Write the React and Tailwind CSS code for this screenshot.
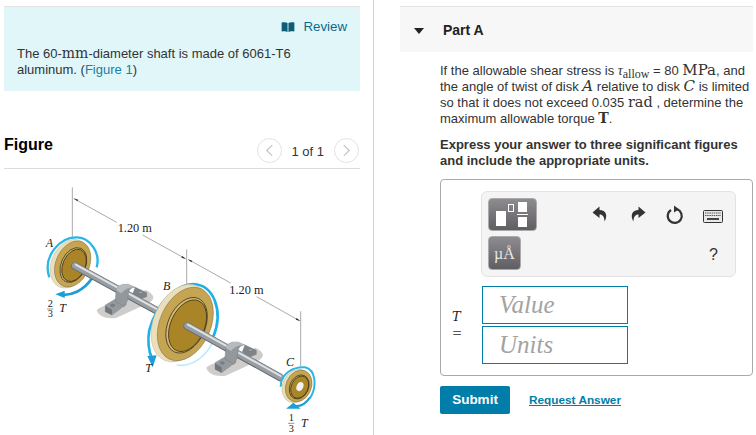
import { useState } from "react";

const sans = "font-['Liberation_Sans',Arial,sans-serif]";
const serif = "font-['Liberation_Serif','Times_New_Roman',serif]";
const math = "font-['DejaVu_Serif','Liberation_Serif',serif]";

// one disk on the shaft: rim, gold face and the recessed ring
const Disk = ({ cx, cy, rx, ry, hole }) => (
  <g transform={`rotate(24 ${cx} ${cy})`}>
    <ellipse cx={cx - rx * 0.16} cy={cy + 3} rx={rx} ry={ry} fill="#eadfba" stroke="#c4b994" strokeWidth="1.5" />
    <ellipse cx={cx} cy={cy} rx={rx * 0.93} ry={ry * 0.95} fill="#c6a552" stroke="#7a6a45" strokeWidth="1.5" />
    <ellipse cx={cx + rx * 0.06} cy={cy + 2} rx={rx * 0.68} ry={ry * 0.72} fill="#d3bb72" stroke="#2c2412" strokeWidth="2" />
    <ellipse cx={cx + rx * 0.1} cy={cy + 2} rx={rx * 0.62} ry={ry * 0.67} fill="#a98528" stroke="#2c2412" strokeWidth="2" />
    {hole && <ellipse cx={cx + rx * 0.1} cy={cy} rx={rx * 0.24} ry={ry * 0.27} fill="#f2f2f2" />}
  </g>
);

// pillow block, drawn in two parts so the shaft runs through it
const BearingBack = ({ x, y }) => (
  <g transform={`translate(${x} ${y})`}>
    <path d="M-78 48 C-60 30 -30 35 0 20 L70 -12 C96 2 98 14 80 26 L-20 72 C-50 76 -75 65 -78 48 Z" fill="#cfcdcb" />
    <path d="M38 -20 L72 -4 L72 8 L50 16 L30 0 Z" fill="#7f8488" stroke="#5f6468" />
    <ellipse cx="54" cy="-5" rx="7" ry="4" fill="#a0a5a8" stroke="#555" />
  </g>
);

const BearingFront = ({ x, y }) => (
  <g transform={`translate(${x} ${y})`}>
    <path d="M-52 33 L-18 13 L12 30 L-32 63 L-52 53 Z" fill="#959a9e" stroke="#6d7276" />
    <path d="M-52 35 L-32 47 L-32 63 L-52 53 Z" fill="#71767a" />
    <ellipse cx="-30" cy="34" rx="6" ry="4" fill="#80858a" stroke="#555" />
    <path d="M-20 -12 C-14 -26 -2 -30 16 -29 L38 -20 C24 -20 17 -10 17 2 L14 20 L5 38 L-22 22 Z" fill="#93989c" stroke="#686d71" />
    <path d="M-20 -12 C-14 -26 -2 -30 16 -29 L38 -20 C22 -22 6 -16 -4 -2 Z" fill="#b7bbbe" />
  </g>
);

const Shaft = ({ x1, y1, x2, y2 }) => (
  <g strokeLinecap="round">
    <line x1={x1} y1={y1} x2={x2} y2={y2} stroke="#62686e" strokeWidth="23" />
    <line x1={x1} y1={y1 - 1} x2={x2} y2={y2 - 1} stroke="#979da2" strokeWidth="19" />
    <line x1={x1 + 2} y1={y1 - 4} x2={x2 + 2} y2={y2 - 4} stroke="#dfe2e4" strokeWidth="6" />
  </g>
);

const Frac = ({ x, y, n, d }) => (
  <g fontSize="31" fill="#222">
    <text x={x} y={y}>{n}</text>
    <line x1={x - 2} y1={y + 6} x2={x + 17} y2={y + 6} stroke="#333" strokeWidth="1.5" />
    <text x={x} y={y + 31}>{d}</text>
  </g>
);

const ShaftFigure = () => (
  <svg viewBox="0 0 1110 795" className={`block h-[265px] w-[370px] ${serif}`}>
    {/* dimension lines */}
    <g stroke="#555" strokeWidth="1.5" fill="none">
      <line x1="217" y1="52" x2="217" y2="205" />
      <line x1="560" y1="238" x2="560" y2="340" />
      <line x1="902" y1="424" x2="902" y2="590" />
      <line x1="222" y1="86" x2="350" y2="157" />
      <line x1="428" y1="195" x2="556" y2="266" />
      <line x1="566" y1="269" x2="692" y2="339" />
      <line x1="770" y1="380" x2="898" y2="452" />
    </g>
    <g fill="#333">
      <path d="M221 85 L235 89 L232 94 Z" />
      <path d="M558 267 L544 263 L547 258 Z" />
      <path d="M563 268 L577 272 L574 277 Z" />
      <path d="M901 453 L887 449 L890 444 Z" />
    </g>
    <text x="353" y="186" fontSize="37" fill="#222">1.20 m</text>
    <text x="688" y="372" fontSize="37" fill="#222">1.20 m</text>

    <BearingBack x={368} y={372} />
    <BearingBack x={697} y={545} />

    {/* disk A */}
    <path d="M148 322 C128 262 176 200 232 202 C272 204 302 250 290 292" fill="none" stroke="#29b6e8" strokeWidth="7" />
    <Disk cx={218} cy={282} rx={54} ry={76} />
    <path d="M278 322 C252 362 214 378 182 374" fill="none" stroke="#1a9fd6" strokeWidth="8" />
    <path d="M166 373 L194 362 L194 384 Z" fill="#1a9fd6" />
    <Shaft x1={225} y1={288} x2={470} y2={422} />
    <BearingFront x={368} y={372} />

    {/* disk B */}
    <path d="M640 500 C672 420 640 345 580 342 C530 342 470 400 448 480 C442 510 446 545 456 566" fill="none" stroke="#1fb1e6" strokeWidth="8" />
    <path d="M442 558 L470 556 L458 592 Z" fill="#1a9fd6" />
    <Disk cx={556} cy={462} rx={82} ry={122} />
    <path d="M530 585 C580 592 625 555 645 500" fill="none" stroke="#bdeaf8" strokeWidth="5" />
    <Shaft x1={562} y1={468} x2={840} y2={622} />
    <BearingFront x={697} y={545} />

    {/* disk C */}
    <path d="M842 650 C842 610 880 590 915 592 C948 600 952 650 930 685" fill="none" stroke="#29b6e8" strokeWidth="6" />
    <Disk cx={896} cy={648} rx={41} ry={52} hole />
    <path d="M930 682 C915 705 895 712 875 706" fill="none" stroke="#1a9fd6" strokeWidth="6" />
    <path d="M858 716 L880 698 L902 716 Z" fill="#1a9fd6" />

    {/* labels */}
    <g fontStyle="italic" fontSize="36" fill="#222">
      <text x="137" y="231">A</text>
      <text x="489" y="360">B</text>
      <text x="858" y="588">C</text>
      <text x="436" y="606">T</text>
      <text x="178" y="426">T</text>
      <text x="903" y="770">T</text>
    </g>
    <Frac x={143} y={411} n="2" d="3" />
    <Frac x={866} y={754} n="1" d="3" />
  </svg>
);

const Paginator = () => (
  <div className="flex items-center pr-px">
    <span className="flex h-[25px] w-[25px] items-center justify-center rounded-full border border-[#e3e3e3] text-[#c4c4c4]">
      <svg viewBox="0 0 10 14" className="h-[13px] w-[9px]" fill="none" stroke="currentColor" strokeWidth="1.3"><path d="M8 1 L2 7 L8 13" /></svg>
    </span>
    <span className="ml-[9px] mr-[10px] pt-[3px] text-[13px] leading-[16px] text-[#333]">1 of 1</span>
    <span className="flex h-[25px] w-[25px] items-center justify-center rounded-full border border-[#e3e3e3] text-[#c4c4c4]">
      <svg viewBox="0 0 10 14" className="h-[13px] w-[9px]" fill="none" stroke="currentColor" strokeWidth="1.3"><path d="M2 1 L8 7 L2 13" /></svg>
    </span>
  </div>
);

const UndoIcon = ({ flip }) => (
  <svg viewBox="0 0 16 16" className={`h-[16px] w-[16px] ${flip ? "-scale-x-100" : ""}`} fill="#333">
    <path d="M7.5 0.5 L0.5 6.5 L7.5 12 L7.5 8.6 C10.5 8.4 12.2 10.5 12.6 15.5 C16 9.5 14 4 7.5 4 Z" />
  </svg>
);

const ToolbarIcons = () => (
  <div className="flex items-start">
    <UndoIcon />
    <span className="ml-[22px]"><UndoIcon flip /></span>
    <svg viewBox="0 0 18 20" className="ml-[20px] mt-[-1px] h-[20px] w-[18px]" fill="none" stroke="#333" strokeWidth="2.2">
      <path d="M11 4.3 A7 7 0 1 1 5 5" />
      <path d="M8 0.5 L13 4.2 L8 7.5 Z" fill="#333" stroke="none" />
    </svg>
    <svg viewBox="0 0 20 13" className="ml-[19px] mt-[4px] h-[13px] w-[20px]">
      <rect x="0.5" y="0.5" width="19" height="12" rx="1" fill="#e8e8e8" stroke="#333" />
      <path d="M2 3 H18 M2 5.5 H18" stroke="#555" strokeWidth="1.2" strokeDasharray="1.5 0.7" />
      <path d="M4 9 H16" stroke="#444" strokeWidth="2" />
    </svg>
  </div>
);

const ToolButton = ({ className, children }) => (
  <div className={`rounded-[4px] border border-[#aaa] bg-gradient-to-b from-[#8e8c90] to-[#5f5e62] ${className}`}>{children}</div>
);

const AnswerInput = ({ placeholder }) => {
  const [value, setValue] = useState("");
  return (
    <input
      value={value}
      onChange={(e) => setValue(e.target.value)}
      placeholder={placeholder}
      className={`block h-[38px] w-[146px] border border-[#007da8] bg-white pl-[16px] text-[25px] italic outline-none placeholder:text-[#a3a3a3] ${serif}`}
    />
  );
};

export default function App() {
  return (
    <div className={`flex h-[435px] w-[756px] overflow-hidden bg-white ${sans}`}>
      {/* left column */}
      <div className="w-[374px] shrink-0 border-r border-[#d4d4d4] pl-[4px] pr-[13px] pt-[6px]">
        <div className="h-[85px] border-t border-[#e3e3e3] bg-[#e0f6f9] pl-[13px] pr-[13px] text-[13px] leading-[16px] text-[#333]">
          <div className="flex h-[38px] items-center justify-end pt-[2px] text-[#0b6a8a]">
            <svg viewBox="0 0 14 11" className="mr-[8px] h-[10px] w-[14px]" fill="#0b5d78">
              <path d="M0 0.5 C2.5 0 5 0 6.5 1 V11 C5 10 2.5 10 0 10.5 Z M7.5 1 C9 0 11.5 0 14 0.5 V10.5 C11.5 10 9 10 7.5 11 Z" />
            </svg>
            <span className="text-[13.3px]">Review</span>
          </div>
          <p className="pt-px">
            The 60-<span className={`${math} text-[14px] leading-none`}>mm</span>-diameter shaft is made of 6061-T6 aluminum. (<span className="text-[#1a7fa0]">Figure 1</span>)
          </p>
        </div>
        <div className="mt-[42px] flex h-[36px] items-center justify-between border-b border-[#dcdcdc] pb-[12px]">
          <h2 className="text-[16px] font-bold text-black">Figure</h2>
          <div className="mt-[11px]"><Paginator /></div>
        </div>
        <div className="ml-[-4px] mt-px"><ShaftFigure /></div>
      </div>

      {/* right column */}
      <div className="ml-[26px] w-[353px] shrink-0 pt-[6px]">
        <div className="flex h-[46px] items-center border-t border-[#e3e3e3] bg-[#f7f7f7] pt-[2px]">
          <span className="ml-[14px] h-0 w-0 border-x-[5px] border-t-[6px] border-x-transparent border-t-[#222]" />
          <h3 className="ml-[19px] text-[14px] font-bold text-[#222]">Part A</h3>
        </div>
        <div className="pl-[40px] text-[13px] leading-[16px] text-[#333]">
          <p className="mt-[11px] whitespace-nowrap">
            If the allowable shear stress is <span className={`${serif} text-[14px] italic leading-none`}>τ</span><sub className={`${serif} text-[12px] leading-none`}>allow</sub> = 80 <span className={`${math} text-[15px] leading-none`}>MPa</span>, and<br />
            the angle of twist of disk <span className={`${math} text-[15px] italic leading-none`}>A</span> relative to disk <span className={`${math} text-[15px] italic leading-none`}>C</span> is limited<br />
            so that it does not exceed 0.035 <span className={`${math} text-[14.5px] leading-none`}>rad</span> , determine the<br />
            maximum allowable torque <span className={`${math} text-[14px] font-bold leading-none`}>T</span>.
          </p>
          <p className="mt-[10px] font-bold text-[#333]">
            Express your answer to three significant figures and include the appropriate units.
          </p>

          <div className="mt-[10px] h-[197px] w-[313px] rounded-[4px] border border-[#aaa] pl-[40px] pr-[16px] pt-[11px]">
            <div className="flex h-[86px] justify-between rounded-[6px] border border-[#e3e3e3] bg-[#f4f4f4] pl-[6px] pr-[12px] pt-[6px]">
              <div>
                <ToolButton className="relative h-[33px] w-[49px]">
                  <span className="absolute left-[7px] top-[12px] h-[15px] w-[10px] bg-white" />
                  <span className="absolute left-[19px] top-[5px] h-[8px] w-[6px] border border-white" />
                  <span className="absolute left-[29px] top-[3px] h-[10px] w-[9px] bg-white" />
                  <span className="absolute left-[28px] top-[15px] h-px w-[11px] bg-white" />
                  <span className="absolute left-[29px] top-[18px] h-[10px] w-[9px] bg-white" />
                </ToolButton>
                <ToolButton className={`mt-[5px] flex h-[34px] w-[33px] items-center justify-center pt-[2px] text-[16px] text-[#e8e8e8] ${serif}`}>
                  µÅ
                </ToolButton>
              </div>
              <div className="flex flex-col items-end">
                <div className="pt-[8px]"><ToolbarIcons /></div>
                <span className="mr-[5px] mt-[21px] text-[16px] leading-[18px] text-[#333]">?</span>
              </div>
            </div>
            <div className="ml-[-40px] mt-[9px] flex">
              <div className="flex w-[41px] flex-col items-start justify-center pl-[11px]">
                <span className={`${math} text-[13px] italic leading-[14px] text-[#222]`}>T</span>
                <span className={`${math} mt-[2px] text-[12px] leading-[14px] text-[#555]`}>=</span>
              </div>
              <div className="flex flex-col gap-[2px]">
                <AnswerInput placeholder="Value" />
                <AnswerInput placeholder="Units" />
              </div>
            </div>
          </div>

          <div className="mt-[10px] flex items-center">
            <button className="h-[28px] w-[70px] rounded-[2px] bg-[#007da8] text-[13.5px] font-bold text-white">Submit</button>
            <a className="ml-[19px] text-[11.8px] font-bold text-[#007da8] underline">Request Answer</a>
          </div>
        </div>
      </div>
    </div>
  );
}
